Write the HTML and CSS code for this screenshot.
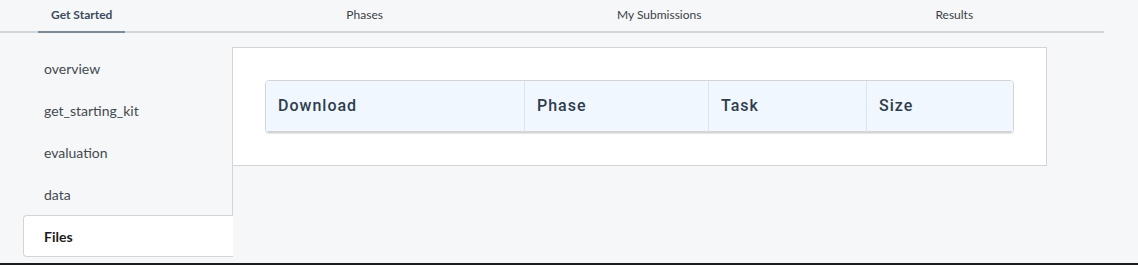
FILE: index.html
```html
<!DOCTYPE html>
<html>
<head>
<meta charset="utf-8">
<link rel="stylesheet" href="styles.css">
</head>
<body>
<nav class="tabs">
  <a class="tab active">Get Started</a>
  <a class="tab">Phases</a>
  <a class="tab">My Submissions</a>
  <a class="tab">Results</a>
</nav>
<main class="page">
  <aside class="side-menu">
    <a class="side-item">overview</a>
    <a class="side-item">get_starting_kit</a>
    <a class="side-item">evaluation</a>
    <a class="side-item">data</a>
    <a class="side-item active">Files</a>
  </aside>
  <section class="panel">
    <table class="files-table">
      <thead>
        <tr>
          <th class="col-download">Download</th>
          <th class="col-phase">Phase</th>
          <th class="col-task">Task</th>
          <th class="col-size">Size</th>
        </tr>
      </thead>
    </table>
  </section>
</main>
<div class="bottom-rule"></div>
</body>
</html>
```
FILE: styles.css
```css
html, body {
  margin: 0;
  padding: 0;
}
body {
  background: #f6f7f9;
  font-family: Lato, "Noto Sans", sans-serif;
  width: 1138px;
  height: 265px;
  overflow: hidden;
}
.tabs {
  display: flex;
  width: 1104px;
  box-sizing: border-box;
  padding-left: 38px;
  border-bottom: 2px solid #d5d6d8;
}
.tab {
  display: block;
  padding: 0 13px;
  height: 31px;
  line-height: 29px;
  font-size: 12px;
  color: #3a3f45;
  margin-bottom: -2px;
  border-bottom: 2px solid transparent;
}
.tab + .tab {
  margin-left: 208px;
}
.tab.active {
  font-weight: 700;
  color: #3b4b5c;
  border-bottom-color: #7b8a96;
}
.page {
  display: flex;
  align-items: flex-start;
  margin-top: 14px;
  padding-left: 23px;
}
.side-menu {
  width: 210px;
  box-sizing: border-box;
  display: flex;
  flex-direction: column;
  border-right: 1px solid #d4d4d5;
}
.side-item {
  display: block;
  height: 42px;
  line-height: 40px;
  padding-top: 2px;
  box-sizing: border-box;
  padding-left: 21px;
  font-size: 14px;
  color: #444a50;
}
.side-item.active {
  background: #fff;
  border: 1px solid #d4d4d5;
  border-right: none;
  border-radius: 4px 0 0 4px;
  padding-left: 20px;
  line-height: 38px;
  margin-right: -1px;
  font-weight: 700;
  color: #1b1c1d;
}
.panel {
  margin-left: -1px;
  width: 815px;
  box-sizing: border-box;
  background: #fff;
  border: 1px solid #d4d4d5;
  padding: 32px;
}
.files-table {
  width: 749px;
  border-collapse: separate;
  border-spacing: 0;
  border: 1px solid #d4d4d5;
  border-radius: 4px;
  box-shadow: 0 1px 1px rgba(34, 36, 38, 0.12);
  overflow: hidden;
}
.files-table th {
  background: #f0f7fe;
  height: 51px;
  box-sizing: border-box;
  text-align: left;
  padding: 0 12px 2px;
  font-family: Roboto, "Liberation Sans", sans-serif;
  font-weight: 500;
  font-size: 16px;
  letter-spacing: 1px;
  color: #2f3d4c;
  border-left: 1px solid #dde3ea;
  border-bottom: 1px solid #d4d4d5;
}
.files-table th:first-child {
  border-left: none;
}
.col-download { width: 258px; }
.col-phase { width: 184px; }
.col-task { width: 158px; }
.col-size { width: 147px; }
.bottom-rule {
  margin-top: 6px;
  border-top: 2px solid #1b1c1d;
}
```
